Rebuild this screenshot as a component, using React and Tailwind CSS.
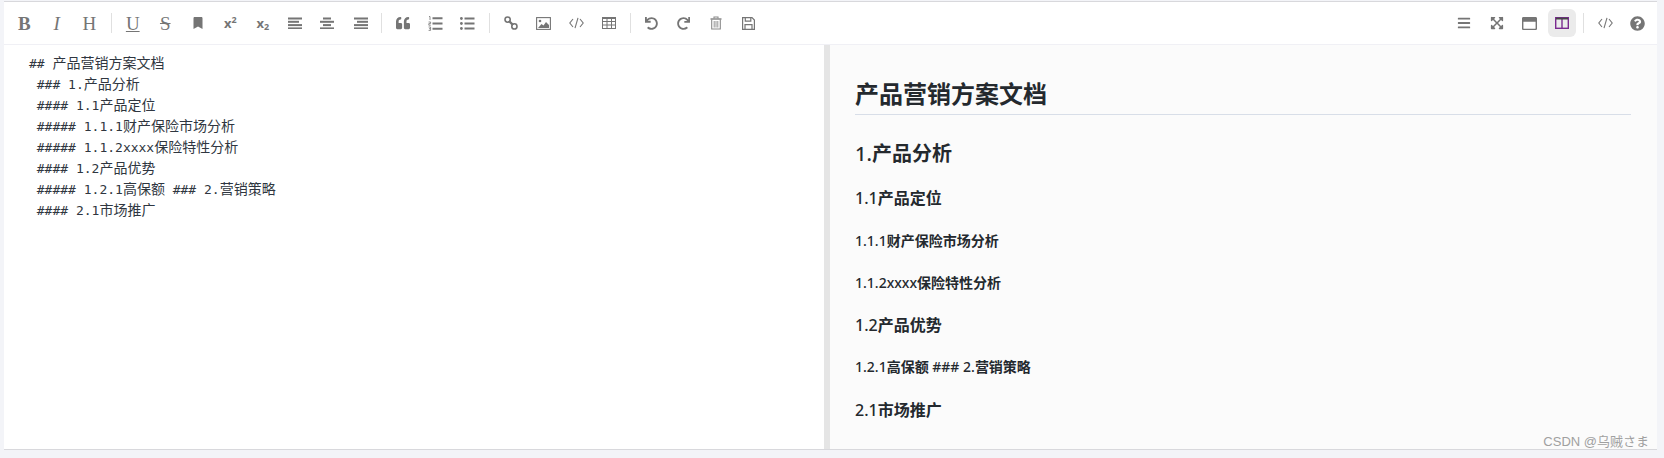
import React from "react";
import { FaBookmark, FaQuoteLeft, FaUndo, FaRedo, FaBars, FaExpandArrowsAlt, FaRegWindowMaximize, FaQuestionCircle } from "react-icons/fa";

const Btn = ({ children, active }) => (
  <div className="w-[32.5px] h-7 flex items-center justify-center shrink-0">
    <div className={`w-7 h-7 rounded-md flex items-center justify-center ${active ? "bg-[#ebebeb]" : ""}`}>{children}</div>
  </div>
);
const Sep = ({ cls = "mx-[5px]" }) => <div className={`w-px h-5 bg-[#e0e0e0] shrink-0 ${cls}`} />;
const Letter = ({ c, cls = "" }) => (
  <span className={`text-[19px] leading-none text-[#757575] ${cls}`} style={{ fontFamily: '"Liberation Serif",serif' }}>{c}</span>
);
const Align = ({ rows }) => (
  <svg width="15" height="12" viewBox="0 0 15 12" fill="#757575">
    {rows.map(([x, w], i) => <rect key={i} x={x} y={i * 3.3 + 0.5} width={w} height="2" />)}
  </svg>
);
const CodeIcon = () => (
  <svg width="15" height="12" viewBox="0 0 15 12" fill="none" stroke="#757575" strokeWidth="1.1">
    <path d="M4 2 L0.8 6 L4 10" /><path d="M11 2 L14.2 6 L11 10" /><path d="M9 0.8 L6 11.2" />
  </svg>
);
const LinkIcon = () => (
  <svg width="14" height="14" viewBox="0 0 14 14" fill="none" stroke="#757575" strokeWidth="1.6">
    <circle cx="3.6" cy="3.6" r="2.6" /><circle cx="10.4" cy="10.4" r="2.6" /><path d="M5 5 L9 9" strokeWidth="2.4" />
  </svg>
);
const SplitIcon = () => (
  <svg width="14" height="12" viewBox="0 0 14 12" fill="none" stroke="#7a2a90" strokeWidth="1.4">
    <rect x="0.7" y="0.7" width="12.6" height="10.6" /><path d="M7 1 V11" /><path d="M1 1.6 H13" stroke="#444" strokeWidth="1.8" />
  </svg>
);
const ImageIcon = () => (
  <svg width="15" height="13" viewBox="0 0 15 13">
    <rect x="0.6" y="0.6" width="13.8" height="11.8" fill="none" stroke="#757575" strokeWidth="1.1" />
    <circle cx="4" cy="4" r="1.3" fill="#757575" />
    <path d="M2 11 L5.5 7 L7.5 8.5 L10 5 L13 8 V11 Z" fill="#757575" />
  </svg>
);
const TableIcon = () => (
  <svg width="14" height="12" viewBox="0 0 14 12" fill="none" stroke="#757575" strokeWidth="1">
    <rect x="0.5" y="0.5" width="13" height="11" />
    <path d="M0.5 1.2 H13.5" strokeWidth="1.6" />
    <path d="M0.5 4.5 H13.5 M0.5 8 H13.5 M5 1 V11.5 M9.5 1 V11.5" />
  </svg>
);
const TrashIcon = () => (
  <svg width="12" height="14" viewBox="0 0 12 14" fill="none" stroke="#8a8a8a" strokeWidth="1.1">
    <path d="M0.5 3 H11.5" strokeWidth="1.5" />
    <path d="M4 2.5 V1 H8 V2.5" />
    <path d="M1.7 3.5 V13 H10.3 V3.5" />
    <path d="M4.2 5 V11.5 M6 5 V11.5 M7.8 5 V11.5" strokeWidth="0.9" />
  </svg>
);
const SaveIcon = () => (
  <svg width="13" height="13" viewBox="0 0 13 13" fill="none" stroke="#757575" strokeWidth="1.2">
    <path d="M0.6 0.6 H10 L12.4 3 V12.4 H0.6 Z" />
    <path d="M3.3 0.8 V4.2 H8.8 V0.8" />
    <path d="M3 12.2 V7.6 H10 V12.2" />
  </svg>
);
const OlIcon = () => (
  <svg width="15" height="15" viewBox="0 0 15 15">
    <path d="M4.5 2.2 H14.5 M4.5 7.5 H14.5 M4.5 12.8 H14.5" stroke="#757575" strokeWidth="2" />
    <path d="M1 0.5 H2 V4 M0.6 6 H2.6 V7.6 H0.8 V9.2 H2.8 M0.6 11 H2.6 V14.4 H0.6 M1 12.7 H2.6" fill="none" stroke="#757575" strokeWidth="0.8" />
  </svg>
);
const UlIcon = () => (
  <svg width="15" height="13" viewBox="0 0 15 13" fill="#757575">
    <path d="M4.5 1.5 H14.5 M4.5 6.5 H14.5 M4.5 11.5 H14.5" stroke="#757575" strokeWidth="2" />
    <circle cx="1.4" cy="1.5" r="1.4" /><circle cx="1.4" cy="6.5" r="1.4" /><circle cx="1.4" cy="11.5" r="1.4" />
  </svg>
);
const I = ({ as: C, size = 13 }) => <C size={size} color="#757575" />;

const L = ({ children }) => <span className="text-[13px]">{children}</span>;
const Line = ({ first, parts }) => (
  <div className={`h-[21px] leading-[21px] whitespace-pre ${first ? "" : "pl-[7.8px]"}`}>
    {parts.map((p, i) => (i % 2 === 0 ? <L key={i}>{p}</L> : <span key={i}>{p}</span>))}
  </div>
);
const Lat = ({ children }) => <span className="font-medium">{children}</span>;

export default function App() {
  return (
    <div className="w-[1664px] h-[458px] bg-[#f3f4f8] pt-px pl-1 pr-[7px] pb-2 overflow-hidden" style={{ fontFamily: '"Noto Sans","Noto Sans CJK SC",sans-serif' }}>
      <div className="relative h-full flex flex-col border-t border-b border-[#d8d8dc] bg-white">
        <div className="h-[43px] shrink-0 flex items-center justify-between border-b border-[#f0f0f5] pl-[4px] pr-[3px]">
          <div className="flex items-center">
            <Btn><Letter c="B" cls="font-bold" /></Btn>
            <Btn><Letter c="I" cls="italic" /></Btn>
            <Btn><Letter c="H" /></Btn>
            <Sep />
            <Btn><Letter c="U" cls="underline" /></Btn>
            <Btn><Letter c="S" cls="line-through" /></Btn>
            <Btn><I as={FaBookmark} size={12} /></Btn>
            <Btn><span className="text-[13px] font-bold text-[#757575] leading-none">x<sup className="text-[9px]">2</sup></span></Btn>
            <Btn><span className="text-[13px] font-bold text-[#757575] leading-none">x<sub className="text-[9px]">2</sub></span></Btn>
            <Btn><Align rows={[[0, 14], [0, 11], [0, 14], [0, 14]]} /></Btn>
            <Btn><Align rows={[[3, 8], [0, 14], [3, 8], [0, 14]]} /></Btn>
            <Btn><Align rows={[[1, 14], [4, 11], [1, 14], [1, 14]]} /></Btn>
            <Sep cls="ml-[4px] mr-[5px]" />
            <Btn><I as={FaQuoteLeft} size={14} /></Btn>
            <Btn><OlIcon /></Btn>
            <Btn><UlIcon /></Btn>
            <Sep />
            <Btn><LinkIcon /></Btn>
            <Btn><ImageIcon /></Btn>
            <Btn><CodeIcon /></Btn>
            <Btn><TableIcon /></Btn>
            <Sep cls="ml-[5px] mr-[4px]" />
            <Btn><I as={FaUndo} size={13} /></Btn>
            <Btn><I as={FaRedo} size={13} /></Btn>
            <Btn><TrashIcon /></Btn>
            <Btn><SaveIcon /></Btn>
          </div>
          <div className="flex items-center">
            <Btn><I as={FaBars} size={14} /></Btn>
            <Btn><I as={FaExpandArrowsAlt} size={14} /></Btn>
            <Btn><I as={FaRegWindowMaximize} size={15} /></Btn>
            <Btn active><SplitIcon /></Btn>
            <Sep />
            <Btn><CodeIcon /></Btn>
            <Btn><I as={FaQuestionCircle} size={15} /></Btn>
          </div>
        </div>
        <div className="flex-1 flex min-h-0">
          <div className="w-[820px] shrink-0 pl-[25px] pt-[8px] text-[14px] text-[#2f3640]" style={{ fontFamily: '"DejaVu Sans Mono","Noto Sans CJK SC",monospace' }}>
            <Line first parts={["## ", "产品营销方案文档"]} />
            <Line parts={["### 1.", "产品分析"]} />
            <Line parts={["#### 1.1", "产品定位"]} />
            <Line parts={["##### 1.1.1", "财产保险市场分析"]} />
            <Line parts={["##### 1.1.2xxxx", "保险特性分析"]} />
            <Line parts={["#### 1.2", "产品优势"]} />
            <Line parts={["##### 1.2.1", "高保额", " ### 2.", "营销策略"]} />
            <Line parts={["#### 2.1", "市场推广"]} />
          </div>
          <div className="flex-1 min-w-0 bg-[#fbfbfb] border-l-[6px] border-[#e5e5e5] pl-[25px] pr-[26px] text-[#24292e]">
            <h2 className="text-[24px] font-bold leading-[30px] mt-[34px] pb-[5px] border-b border-[#d8dee8]">产品营销方案文档</h2>
            <h3 className="text-[20px] font-bold leading-[25px] mt-[26px]"><Lat>1.</Lat>产品分析</h3>
            <h4 className="text-[16px] font-bold leading-[20px] mt-[22px]"><Lat>1.1</Lat>产品定位</h4>
            <h5 className="text-[14px] font-bold leading-[18px] mt-[24px]"><Lat>1.1.1</Lat>财产保险市场分析</h5>
            <h5 className="text-[14px] font-bold leading-[18px] mt-[24px]"><Lat>1.1.2xxxx</Lat>保险特性分析</h5>
            <h4 className="text-[16px] font-bold leading-[20px] mt-[23px]"><Lat>1.2</Lat>产品优势</h4>
            <h5 className="text-[14px] font-bold leading-[18px] mt-[23px]"><Lat>1.2.1</Lat>高保额<Lat> ### 2.</Lat>营销策略</h5>
            <h4 className="text-[16px] font-bold leading-[20px] mt-[24px]"><Lat>2.1</Lat>市场推广</h4>
          </div>
        </div>
        <div className="absolute right-[8px] bottom-[-3px] text-[13px] leading-[20px] text-[#a0a0a0]" style={{ fontFamily: '"Liberation Sans","Noto Sans CJK JP",sans-serif' }}>CSDN @乌贼さま</div>
      </div>
    </div>
  );
}
